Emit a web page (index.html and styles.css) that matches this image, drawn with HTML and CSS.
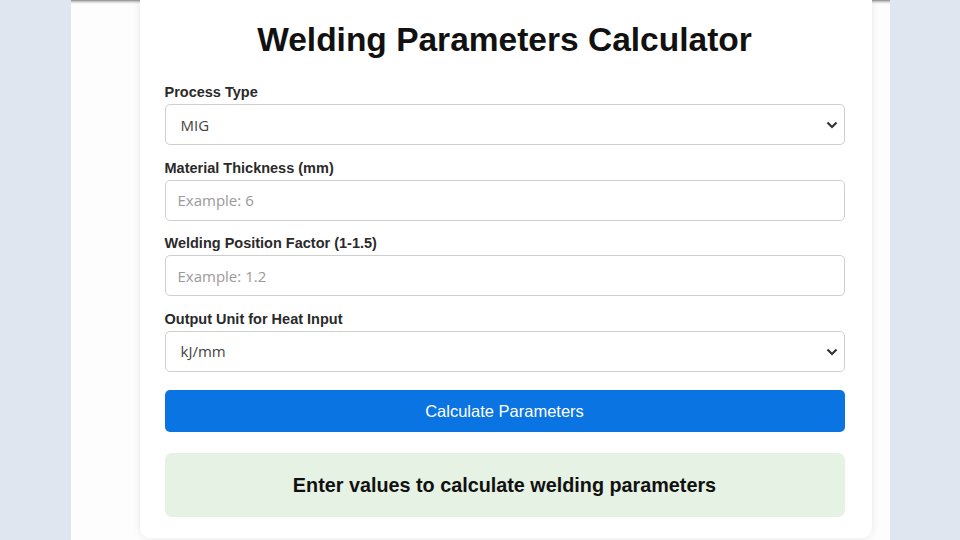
FILE: index.html
```html
<!DOCTYPE html>
<html lang="en">
<head>
    <meta charset="UTF-8">
    <meta name="viewport" content="width=device-width, initial-scale=1.0">
    <title>Welding Parameters Calculator</title>
    <link rel="stylesheet" href="styles.css">
</head>
<body>

<div class="page">
    <div class="calculator">
        <h1>Welding Parameters Calculator</h1>

        <div class="form-group">
            <label for="process">Process Type</label>
            <div class="select-wrap">
                <select id="process">
                    <option value="MIG">MIG</option>
                    <option value="TIG">TIG</option>
                    <option value="Stick">Stick</option>
                </select>
                <svg class="chevron" viewBox="0 0 12 8" width="12" height="8"><path d="M1.5 1.5 L6 6 L10.5 1.5" fill="none" stroke="#333" stroke-width="2.2"/></svg>
            </div>
        </div>

        <div class="form-group">
            <label for="thickness">Material Thickness (mm)</label>
            <input type="number" id="thickness" placeholder="Example: 6">
        </div>

        <div class="form-group">
            <label for="position">Welding Position Factor (1-1.5)</label>
            <input type="number" id="position" placeholder="Example: 1.2">
        </div>

        <div class="form-group">
            <label for="unit">Output Unit for Heat Input</label>
            <div class="select-wrap">
                <select id="unit">
                    <option value="kJ/mm">kJ/mm</option>
                    <option value="J/mm">J/mm</option>
                </select>
                <svg class="chevron" viewBox="0 0 12 8" width="12" height="8"><path d="M1.5 1.5 L6 6 L10.5 1.5" fill="none" stroke="#333" stroke-width="2.2"/></svg>
            </div>
        </div>

        <button class="calc-btn">Calculate Parameters</button>

        <div class="result">Enter values to calculate welding parameters</div>
    </div>
</div>

</body>
</html>
```

FILE: styles.css
```css
/* Basic Reset */
* {
    margin: 0;
    padding: 0;
    box-sizing: border-box;
}

body {
    font-family: "Liberation Sans", Arial, sans-serif;
    background-color: #dfe6ef;
    color: #222;
    height: 540px;
    overflow: hidden;
}

.page {
    width: 819px;
    height: 540px;
    margin: 0 auto;
    padding-left: 69px;
    background: linear-gradient(#8a8a8a 0, #d8d8d8 2px, #fdfdfd 4px);
}

.calculator {
    width: 732px;
    height: 538px;
    background-color: #fff;
    padding: 20px 27px 0 25px;
    border-radius: 0 0 10px 10px;
    box-shadow: 0 0 8px rgba(0, 0, 0, 0.09);
}

h1 {
    text-align: center;
    font-size: 33.5px;
    color: #111;
    line-height: 39px;
    margin-bottom: 24px;
}

.form-group {
    margin-bottom: 13.5px;
}

.form-group label {
    display: block;
    font-weight: bold;
    font-size: 14.5px;
    line-height: 18px;
    color: #2a2a2a;
    margin-bottom: 3px;
}

.form-group input,
.form-group select {
    width: 100%;
    height: 41px;
    padding: 0 12px;
    border: 1px solid #cfcfcf;
    border-radius: 5px;
    font-family: "Open Sans", sans-serif;
    font-size: 15px;
    color: #444;
    background-color: #fff;
    outline: none;
}

.form-group select {
    appearance: none;
    -webkit-appearance: none;
    padding-left: 15px;
}

.form-group input::placeholder {
    color: #9a9a9a;
}

.select-wrap {
    position: relative;
}

.chevron {
    position: absolute;
    right: 7px;
    top: 17px;
    pointer-events: none;
}

.calc-btn {
    display: block;
    width: 100%;
    height: 42px;
    margin-top: 18.5px;
    background-color: #0a74e3;
    color: #fff;
    border: none;
    border-radius: 5px;
    font-family: "Liberation Sans", Arial, sans-serif;
    font-size: 16.5px;
    cursor: pointer;
}

.result {
    margin-top: 21px;
    height: 64px;
    background-color: #e6f2e3;
    border-radius: 7px;
    display: flex;
    align-items: center;
    justify-content: center;
    font-weight: bold;
    font-size: 19.8px;
    color: #111;
}
```
